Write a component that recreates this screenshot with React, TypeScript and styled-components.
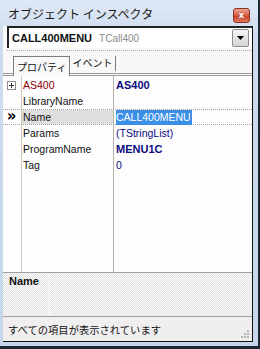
import React from 'react';
import styled, { createGlobalStyle } from 'styled-components';

const UI = `"Liberation Sans", "Noto Sans CJK JP", sans-serif`;
const JP = `"Noto Sans CJK JP", "Liberation Sans", sans-serif`;

const GlobalStyle = createGlobalStyle`
  html, body {
    margin: 0;
    padding: 0;
    background: #c9d9ee;
  }
  body {
    font-family: ${UI};
  }
`;

const Window = styled.div`
  width: 260px;
  height: 349px;
  box-sizing: border-box;
  display: flex;
  flex-direction: column;
  padding: 0 5px 4px 3px;
  background: linear-gradient(#dfe8f5, #cddbee 40px, #c6d7ed);
  border-right: 2px solid #1d2837;
  border-bottom: 3px solid #1d2837;
`;

const TitleBar = styled.div`
  flex: none;
  height: 26px;
  display: flex;
  align-items: flex-start;
`;

const Title = styled.div`
  font-family: ${JP};
  font-size: 12px;
  line-height: 16px;
  color: #1b1b1b;
  padding: 6px 0 0 5px;
`;

const CloseButton = styled.div`
  margin: 8px 3px 0 auto;
  width: 17px;
  height: 15px;
  box-sizing: border-box;
  border: 1px solid #8c3021;
  border-radius: 3px;
  background: linear-gradient(#eaa493, #d65a42 50%, #c8432c 55%, #dc7a5c);
  color: #fff;
  font: bold 9px/13px "DejaVu Sans", sans-serif;
  text-align: center;
  text-shadow: 0 0 1px #6b1a0d;
`;

const Client = styled.div`
  flex: 1;
  display: flex;
  flex-direction: column;
  background: #f8f8f8;
  border-right: 1px solid #111;
  border-bottom: 1px solid #111;
  min-height: 0;
`;

const Combo = styled.div`
  flex: none;
  height: 22px;
  box-sizing: border-box;
  margin-left: 4px;
  display: flex;
  align-items: center;
  padding-left: 3px;
  background: #fff;
  border-top: 2px solid #222;
  border-left: 2px solid #222;
`;

const ComboName = styled.span`
  font: bold 11px ${UI};
  color: #111;
`;

const ComboType = styled.span`
  font: 10px ${UI};
  color: #8a8a8a;
  margin-left: 7px;
`;

const DropButton = styled.div`
  margin: 0 3px 0 auto;
  width: 17px;
  height: 18px;
  box-sizing: border-box;
  border: 1px solid #8e8e8e;
  border-radius: 2px;
  background: linear-gradient(#f6f6f6, #e4e4e4 50%, #d6d6d6);
  display: flex;
  align-items: center;
  justify-content: center;
`;

const DottedRule = styled.div`
  flex: none;
  margin: 2px 0 0 4px;
  border-top: 1px dotted #a8a8a8;
`;

const TabBar = styled.div`
  flex: none;
  height: 25px;
  box-sizing: border-box;
  display: flex;
  align-items: flex-end;
  padding-left: 10px;
  border-bottom: 3px double #9c9c9c;
`;

const Tab = styled.div<{ $active?: boolean }>`
  font-family: ${JP};
  font-size: 10px;
  color: #111;
  box-sizing: border-box;
  position: relative;
  ${({ $active }) =>
    $active
      ? `
    height: 20px;
    margin-bottom: -3px;
    padding: 2px 3px 0 3px;
    background: #f8f8f8;
    border: 1px solid #7c7c7c;
    border-bottom: none;
  `
      : `
    height: 15px;
    margin-bottom: 2px;
    padding: 0 3px 0 2px;
    border-right: 1px solid #7c7c7c;
    line-height: 14px;
  `}
`;

const Grid = styled.div`
  flex: 1;
  padding-top: 1px;
  background:
    linear-gradient(to right, transparent 18px, #cfc6bd 18px, #cfc6bd 19px, transparent 19px),
    linear-gradient(to right, transparent 110px, #b9b1a8 110px, #b9b1a8 111px, transparent 111px),
    #fdfdfd;
`;

const Row = styled.div<{ $selected?: boolean }>`
  display: grid;
  grid-template-columns: 19px 92px 1fr;
  height: 16px;
  box-sizing: border-box;
  align-items: center;
  ${({ $selected }) =>
    $selected &&
    `
    border-top: 1px dotted #a0a0a0;
    border-bottom: 1px dotted #a0a0a0;
  `}
`;

const Gutter = styled.div`
  display: flex;
  align-items: center;
  justify-content: center;
  padding-right: 3px;
  height: 100%;
`;

const PlusBox = styled.div`
  width: 9px;
  height: 9px;
  box-sizing: border-box;
  border: 1px solid #8d8d8d;
  background: #fff;
  position: relative;
  &::before,
  &::after {
    content: '';
    position: absolute;
    background: #333;
  }
  &::before {
    left: 1px;
    right: 1px;
    top: 3px;
    height: 1px;
  }
  &::after {
    top: 1px;
    bottom: 1px;
    left: 3px;
    width: 1px;
  }
`;

const Arrow = styled.span`
  font: bold 15px/14px "DejaVu Sans", sans-serif;
  color: #000;
  margin: -3px 0 0 1px;
`;

const PropName = styled.div<{ $selected?: boolean; $sub?: boolean }>`
  height: 100%;
  display: flex;
  align-items: center;
  padding-left: 1px;
  font: 10.5px ${UI};
  color: ${({ $sub }) => ($sub ? '#8b0000' : '#111')};
  background: ${({ $selected }) => ($selected ? '#dedede' : 'transparent')};
  margin-right: 1px;
`;

const PropValue = styled.div<{ $bold?: boolean }>`
  padding-left: 2px;
  font: ${({ $bold }) => ($bold ? 'bold 11px' : '10.5px')} ${UI};
  color: #0b0b80;
  white-space: nowrap;
`;

const Highlight = styled.span`
  background: #3b8fe6;
  color: #fff;
  padding: 1px 1px 2px 0;
`;

const DescPanel = styled.div`
  flex: none;
  height: 45px;
  box-sizing: border-box;
  border-top: 1px solid #9f9f9f;
  border-bottom: 1px solid #9f9f9f;
  padding: 2px 6px;
  font: bold 11px ${UI};
  color: #111;
  background:
    linear-gradient(to right, transparent 46px, #fafafa 46px, #fafafa 47px, transparent 47px),
    repeating-conic-gradient(#e2e2e2 0 25%, #fbfbfb 0 50%) 0 0 / 2px 2px;
`;

const StatusBar = styled.div`
  flex: none;
  height: 24px;
  display: flex;
  align-items: center;
  padding: 0 0 0 5px;
  background: #f0eeee;
  font-family: ${JP};
  font-size: 10.3px;
  color: #111;
  position: relative;
`;

const Grip = styled.svg`
  position: absolute;
  right: 2px;
  bottom: 2px;
`;

type Prop = {
  name: string;
  value: string;
  bold?: boolean;
  sub?: boolean;
  selected?: boolean;
};

const props: Prop[] = [
  { name: 'AS400', value: 'AS400', bold: true, sub: true },
  { name: 'LibraryName', value: '' },
  { name: 'Name', value: 'CALL400MENU', selected: true },
  { name: 'Params', value: '(TStringList)' },
  { name: 'ProgramName', value: 'MENU1C', bold: true },
  { name: 'Tag', value: '0' },
];

const App: React.FC = () => {
  return (
    <>
      <GlobalStyle />
      <Window>
        <TitleBar>
          <Title>オブジェクト インスペクタ</Title>
          <CloseButton>x</CloseButton>
        </TitleBar>
        <Client>
          <Combo>
            <ComboName>CALL400MENU</ComboName>
            <ComboType>TCall400</ComboType>
            <DropButton>
              <svg width="7" height="4" viewBox="0 0 7 4">
                <path d="M0 0h7L3.5 4z" fill="#000" />
              </svg>
            </DropButton>
          </Combo>
          <DottedRule />
          <TabBar>
            <Tab $active>プロパティ</Tab>
            <Tab>イベント</Tab>
          </TabBar>
          <Grid>
            {props.map((p) => (
              <Row key={p.name} $selected={p.selected}>
                <Gutter>
                  {p.sub && <PlusBox />}
                  {p.selected && <Arrow>»</Arrow>}
                </Gutter>
                <PropName $selected={p.selected} $sub={p.sub}>
                  {p.name}
                </PropName>
                <PropValue $bold={p.bold}>
                  {p.selected ? <Highlight>{p.value}</Highlight> : p.value}
                </PropValue>
              </Row>
            ))}
          </Grid>
          <DescPanel>Name</DescPanel>
          <StatusBar>
            すべての項目が表示されています
            <Grip width="9" height="9" viewBox="0 0 9 9">
              <g fill="#b4b4b4">
                <rect x="6" y="0" width="2" height="2" />
                <rect x="3" y="3" width="2" height="2" />
                <rect x="6" y="3" width="2" height="2" />
                <rect x="0" y="6" width="2" height="2" />
                <rect x="3" y="6" width="2" height="2" />
                <rect x="6" y="6" width="2" height="2" />
              </g>
            </Grip>
          </StatusBar>
        </Client>
      </Window>
    </>
  );
};

export default App;
